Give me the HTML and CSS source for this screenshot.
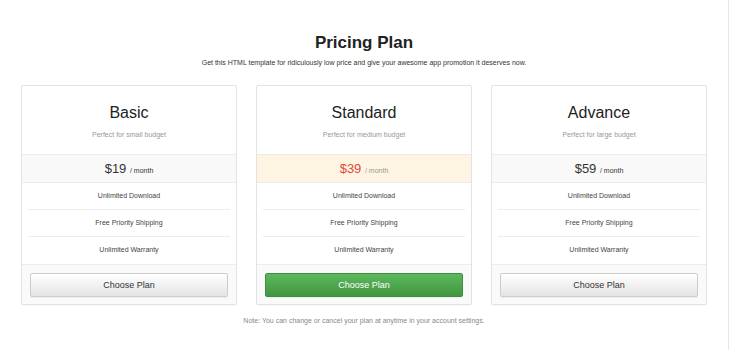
FILE: index.html
```html
<!DOCTYPE html>
<html lang="en">
<head>
    <meta charset="UTF-8">
    <meta name="viewport" content="width=device-width, initial-scale=1.0">
    <title>Pricing Plan</title>
    <link rel="stylesheet" href="styles.css">
</head>
<body>
    <div class="page">
        <div class="header">
            <h1>Pricing Plan</h1>
            <p>Get this HTML template for ridiculously low price and give your awesome app promotion it deserves now.</p>
        </div>

        <div class="plans">
            <div class="plan">
                <div class="plan-head">
                    <h3>Basic</h3>
                    <p>Perfect for small budget</p>
                </div>
                <div class="plan-price">$19 <span>/ month</span></div>
                <ul class="plan-features">
                    <li>Unlimited Download</li>
                    <li>Free Priority Shipping</li>
                    <li>Unlimited Warranty</li>
                </ul>
                <div class="plan-foot">
                    <a href="#" class="btn">Choose Plan</a>
                </div>
            </div>

            <div class="plan featured">
                <div class="plan-head">
                    <h3>Standard</h3>
                    <p>Perfect for medium budget</p>
                </div>
                <div class="plan-price">$39 <span>/ month</span></div>
                <ul class="plan-features">
                    <li>Unlimited Download</li>
                    <li>Free Priority Shipping</li>
                    <li>Unlimited Warranty</li>
                </ul>
                <div class="plan-foot">
                    <a href="#" class="btn btn-success">Choose Plan</a>
                </div>
            </div>

            <div class="plan">
                <div class="plan-head">
                    <h3>Advance</h3>
                    <p>Perfect for large budget</p>
                </div>
                <div class="plan-price">$59 <span>/ month</span></div>
                <ul class="plan-features">
                    <li>Unlimited Download</li>
                    <li>Free Priority Shipping</li>
                    <li>Unlimited Warranty</li>
                </ul>
                <div class="plan-foot">
                    <a href="#" class="btn">Choose Plan</a>
                </div>
            </div>
        </div>

        <p class="note">Note: You can change or cancel your plan at anytime in your account settings.</p>
    </div>
</body>
</html>
```

FILE: styles.css
```css
* {
    margin: 0;
    padding: 0;
    box-sizing: border-box;
}

body {
    font-family: "Liberation Sans", Arial, sans-serif;
    background: #fff;
    color: #333;
}

.page {
    width: 729px;
    height: 350px;
    border-right: 1px solid #e6e6e6;
    padding-top: 33px;
}

.header {
    text-align: center;
}

.header h1 {
    font-size: 17px;
    line-height: 20px;
    font-weight: bold;
    color: #222;
}

.header p {
    font-size: 7px;
    line-height: 10px;
    margin-top: 5px;
    color: #333;
}

.plans {
    display: grid;
    grid-template-columns: repeat(3, 216px);
    gap: 19px;
    justify-content: center;
    margin-top: 17px;
}

.plan {
    border: 1px solid #e3e3e3;
    border-radius: 2px;
    text-align: center;
    background: #fff;
    box-shadow: 0 1px 1px rgba(0,0,0,0.03);
}

.plan-head {
    height: 68px;
    padding-top: 18px;
}

.plan-head h3 {
    font-size: 16px;
    line-height: 18px;
    font-weight: normal;
    color: #222;
}

.plan-head p {
    font-size: 7px;
    line-height: 10px;
    margin-top: 8px;
    color: #999;
}

.plan-price {
    height: 29px;
    line-height: 27px;
    font-size: 13px;
    background: #f9f9f9;
    border-top: 1px solid #ececec;
    border-bottom: 1px solid #ececec;
    color: #333;
}

.plan-price span {
    font-size: 7px;
}

.featured .plan-price {
    background: #fdf5e2;
    color: #e2493a;
}

.featured .plan-price span {
    color: #999;
}

.plan-features {
    list-style: none;
    padding: 0 6px;
}

.plan-features li {
    height: 27px;
    line-height: 26px;
    font-size: 7px;
    color: #444;
    border-bottom: 1px solid #ededed;
}

.plan-features li:last-child {
    border-bottom: none;
}

.plan-foot {
    border-top: 1px solid #ececec;
    background: #fafafa;
    padding: 8px 8px 7px;
}

.btn {
    display: block;
    height: 24px;
    line-height: 22px;
    font-size: 9px;
    color: #333;
    text-decoration: none;
    border: 1px solid #ccc;
    border-radius: 2px;
    background: linear-gradient(#fff, #e4e4e4);
    box-shadow: 0 1px 1px rgba(0,0,0,0.06);
}

.btn-success {
    color: #fff;
    border-color: #3e8f3e;
    background: linear-gradient(#5cb85c, #419641);
}

.note {
    text-align: center;
    font-size: 7px;
    line-height: 10px;
    margin-top: 11px;
    color: #888;
}
```
